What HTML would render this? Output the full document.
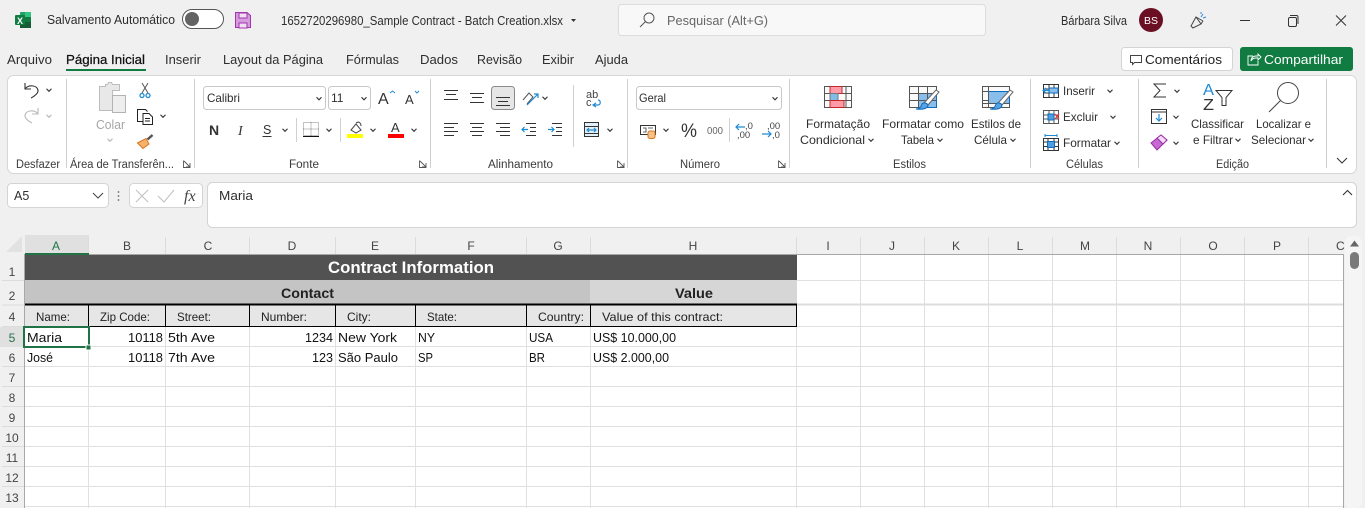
<!DOCTYPE html>
<html lang="pt"><head><meta charset="utf-8"><title>Excel</title>
<style>
html,body{margin:0;padding:0;width:1365px;height:508px;overflow:hidden;background:#f0f0f0}
svg{display:block}
text{font-family:"Liberation Sans",sans-serif;font-size:12px;fill:#333}
.t{font-size:12.5px;fill:#2e2e2e}
.g{font-size:11.5px;fill:#3a3a3a}
.r{font-size:12px;fill:#2e2e2e}
.c{font-size:13px;fill:#111}
.h{font-size:12px;fill:#222}
.ch{font-size:12px;fill:#444;text-anchor:middle}
.rn{font-size:12px;fill:#444;text-anchor:middle}
.chev{fill:none;stroke:#333;stroke-width:1.1}
.chevg{fill:none;stroke:#b5b5b5;stroke-width:1.1}
.l{stroke:#333;stroke-width:1;fill:none}
.b{stroke:#1f8ad2;stroke-width:1.2;fill:none}
.lg{stroke:#d4d4d4;stroke-width:1}
.sep{stroke:#d0d0d0;stroke-width:1}
.gr{stroke:#e0e0e0;stroke-width:1}
</style></head><body>
<svg width="1365" height="508" viewBox="0 0 1365 508" xmlns="http://www.w3.org/2000/svg">
<defs><path id="cv" d="M-2.500-1.300 0 1.300 2.500-1.300"/></defs>
<rect width="1365" height="508" fill="#f0f0f0"/>

<!-- title bar -->
<rect x="20" y="12" width="11" height="16" rx="1" fill="#21a366"/><rect x="25" y="12" width="6" height="5" fill="#33c481"/><rect x="25" y="17" width="6" height="5" fill="#107c41"/><rect x="20" y="22" width="11" height="6" fill="#185c37"/>
<rect x="15" y="15" width="10" height="10" rx="1" fill="#107c41"/><text x="17" y="24" style="font-size:9px;font-weight:bold;fill:#fff">X</text>
<text x="47" y="24" class="t" textLength="128" lengthAdjust="spacingAndGlyphs">Salvamento Automático</text>
<rect x="182.500" y="9.500" width="41" height="19" rx="9.500" fill="#fff" stroke="#555"/><circle cx="192" cy="19" r="7" fill="#636363"/>
<path d="M235.500 12.500H247L250.500 15.500V27.500H235.500Z" fill="#d59bdc" stroke="#a335b0"/><rect x="239" y="13" width="8" height="5" fill="#f0e0f2" stroke="#a335b0"/><rect x="239" y="23" width="8" height="5" fill="#f0e0f2" stroke="#a335b0"/>
<text x="281" y="25" class="t" textLength="282" lengthAdjust="spacingAndGlyphs">1652720296980_Sample Contract - Batch Creation.xlsx</text>
<path d="M571 19h5l-2.500 3z" fill="#333"/>
<rect x="618.500" y="4.500" width="367" height="31" rx="3" fill="#f8f8f8" stroke="#dcdcdc"/>
<circle cx="649" cy="18" r="5" fill="none" stroke="#555"/><path d="M645.500 21.500 640 27" stroke="#555" fill="none"/>
<text x="667" y="25" style="font-size:12.500px;fill:#666" textLength="101" lengthAdjust="spacingAndGlyphs">Pesquisar (Alt+G)</text>
<text x="1061" y="25" class="t" textLength="66" lengthAdjust="spacingAndGlyphs">Bárbara Silva</text>
<circle cx="1151" cy="20" r="12" fill="#6b0f24"/><text x="1151" y="24" style="font-size:10.500px;fill:#fff;text-anchor:middle">BS</text>
<path d="M1196 17 1191 26 1193 28 1201 24ZM1196 17 1203 21M1201 24 1203 21" fill="none" stroke="#444"/><path d="M1203 14 1201 17M1206 17 1203 18M1201 12v2" stroke="#2b88d8" fill="none"/>
<path d="M1240 20.500h10" stroke="#333"/><rect x="1288.500" y="17.500" width="8" height="9" rx="1.500" fill="none" stroke="#333"/><path d="M1290.500 16v-.5h6a1.500 1.500 0 0 1 1.500 1.500v7" fill="none" stroke="#333"/>
<path d="M1336 15.500 1346 25.500M1346 15.500 1336 25.500" stroke="#333" fill="none"/>

<!-- tabs -->
<text x="7" y="64" class="t" textLength="45" lengthAdjust="spacingAndGlyphs">Arquivo</text>
<text x="66" y="64" class="t" textLength="79" lengthAdjust="spacingAndGlyphs" style="fill:#111;stroke:#111;stroke-width:.25">Página Inicial</text>
<rect x="66" y="69" width="80" height="2" fill="#107c41"/>
<text x="165" y="64" class="t" textLength="36" lengthAdjust="spacingAndGlyphs">Inserir</text>
<text x="223" y="64" class="t" textLength="100" lengthAdjust="spacingAndGlyphs">Layout da Página</text>
<text x="346" y="64" class="t" textLength="53" lengthAdjust="spacingAndGlyphs">Fórmulas</text>
<text x="420" y="64" class="t" textLength="38" lengthAdjust="spacingAndGlyphs">Dados</text>
<text x="477" y="64" class="t" textLength="45" lengthAdjust="spacingAndGlyphs">Revisão</text>
<text x="542" y="64" class="t" textLength="32" lengthAdjust="spacingAndGlyphs">Exibir</text>
<text x="595" y="64" class="t" textLength="33" lengthAdjust="spacingAndGlyphs">Ajuda</text>
<rect x="1121.500" y="47.500" width="111" height="23" rx="3" fill="#fff" stroke="#d4d4d4"/>
<path d="M1130.500 55.500h11v7h-7l-2 2v-2h-2z" fill="none" stroke="#444"/>
<text x="1145" y="64" class="t" textLength="77" lengthAdjust="spacingAndGlyphs" style="fill:#222">Comentários</text>
<rect x="1240" y="47" width="113" height="24" rx="3" fill="#107c41"/>
<path d="M1253 56h-5v9h10v-4M1251 61c0-3 2-5 5-5h2v-2l3 3-3 3v-2h-2c-2 0-4 1-5 3z" fill="none" stroke="#fff" stroke-width=".9"/>
<text x="1264" y="64" style="font-size:12.500px;fill:#fff" textLength="79" lengthAdjust="spacingAndGlyphs">Compartilhar</text>

<!-- ribbon -->
<rect x="7.500" y="75.500" width="1349" height="98" rx="6" fill="#fff" stroke="#d6d6d6"/>
<path d="M66.500 79v89M194.500 79v89M430.500 79v89M627.500 79v89M789.500 79v89M1030.500 79v89M1138.500 79v89M1326.500 79v89" class="sep"/>
<text x="16" y="168" class="g" textLength="44" lengthAdjust="spacingAndGlyphs">Desfazer</text>
<text x="70" y="168" class="g" textLength="104" lengthAdjust="spacingAndGlyphs">Área de Transferên...</text>
<text x="289" y="168" class="g" textLength="30" lengthAdjust="spacingAndGlyphs">Fonte</text>
<text x="488" y="168" class="g" textLength="65" lengthAdjust="spacingAndGlyphs">Alinhamento</text>
<text x="680" y="168" class="g" textLength="40" lengthAdjust="spacingAndGlyphs">Número</text>
<text x="893" y="168" class="g" textLength="33" lengthAdjust="spacingAndGlyphs">Estilos</text>
<text x="1066" y="168" class="g" textLength="37" lengthAdjust="spacingAndGlyphs">Células</text>
<text x="1216" y="168" class="g" textLength="33" lengthAdjust="spacingAndGlyphs">Edição</text>
<g fill="none" stroke="#555" stroke-width=".9">
<path d="M183.500 160.500v7h7M184 161l6 6M190 163v4h-4"/>
<path d="M419.500 160.500v7h7M420 161l6 6M426 163v4h-4"/>
<path d="M617.500 160.500v7h7M618 161l6 6M624 163v4h-4"/>
<path d="M778.500 160.500v7h7M779 161l6 6M785 163v4h-4"/>
</g>

<!-- undo / redo -->
<path d="M25 83v6h6M25 89c3-5 13-4 13 2 0 2-3 5-7 7" fill="none" stroke="#333" stroke-width="1.100"/>
<path d="M38 108v6h-6M38 114c-3-5-13-4-13 2 0 2 3 5 7 7" fill="none" stroke="#b8b8b8" stroke-width="1.100"/>
<use href="#cv" x="49" y="90" class="chev"/><use href="#cv" x="49" y="116" class="chevg"/>

<!-- paste -->
<path d="M99.500 86.500h6v-2h2l1-2h3l1 2h2h5v6h-7v20h-13z" fill="#e8e8e8" stroke="#bdbdbd"/>
<rect x="112.500" y="95.500" width="13" height="17" fill="#eee" stroke="#b3b3b3"/>
<text x="96" y="129" style="font-size:12.500px;fill:#a6a6a6" textLength="29" lengthAdjust="spacingAndGlyphs">Colar</text>
<use href="#cv" x="110" y="140" class="chevg"/>
<path d="M142 83 148 93M148 83 142 93" stroke="#555" fill="none"/><circle cx="142" cy="95.500" r="2" fill="none" stroke="#1f8ad2" stroke-width="1.300"/><circle cx="148" cy="95.500" r="2" fill="none" stroke="#1f8ad2" stroke-width="1.300"/>
<path d="M143 121.500h-5.500v-12h8l2 2" fill="none" stroke="#222"/><path d="M143 113.500h6l3.500 3.500v7.500h-9.500zM145 118.500h5M145 121h5" fill="#fff" stroke="#222"/>
<use href="#cv" x="163" y="116" class="chev"/>
<path d="M137.500 143 146 138.500 149 144 143 148.500Z" fill="#f5b26b" stroke="#d8741c"/><path d="M147.500 139.500 152.500 135" stroke="#555" stroke-width="2.500"/>

<!-- font -->
<rect x="203.500" y="86.500" width="122" height="23" rx="3" fill="#fff" stroke="#c8c8c8"/>
<text x="207" y="102" class="r" textLength="33" lengthAdjust="spacingAndGlyphs">Calibri</text><use href="#cv" x="319" y="98.500" class="chev"/>
<rect x="328.500" y="86.500" width="42" height="23" rx="3" fill="#fff" stroke="#c8c8c8"/>
<text x="331" y="102" class="r">11</text><use href="#cv" x="364" y="98.500" class="chev"/>
<text x="378" y="104" style="font-size:16px;fill:#333">A</text><path d="M390 93l2.500-2 2.500 2" fill="none" stroke="#1f8ad2"/>
<text x="405" y="104" style="font-size:13px;fill:#333">A</text><path d="M415 91l2 2 2-2" fill="none" stroke="#1f8ad2"/>
<text x="209" y="135" style="font-size:14px;font-weight:bold;fill:#333">N</text>
<text x="238" y="135" style="font-size:14px;font-style:italic;font-family:'Liberation Serif',serif;fill:#333">I</text>
<text x="263" y="134" style="font-size:12.500px;fill:#333">S</text><path d="M262.500 136.500h9" stroke="#333"/>
<use href="#cv" x="285" y="130" class="chev"/><path d="M296.500 118v24M340.500 118v24" class="sep"/>
<path d="M303.500 122.500h15v13h-15zM311 122.500v13M303.500 129h15" fill="none" stroke="#888" stroke-dasharray="1 1"/><path d="M303 136.500h16" stroke="#111"/>
<use href="#cv" x="329" y="130" class="chev"/>
<path d="M351 130 356 124 361 130 356 133ZM356 123l2-1c2 0 3 2 3 4" fill="none" stroke="#444"/><rect x="347" y="134" width="16" height="4" fill="#ff0"/>
<use href="#cv" x="373" y="130" class="chev"/>
<text x="391" y="132" style="font-size:13px;fill:#333">A</text><rect x="388" y="134" width="16" height="4" fill="#f00"/>
<use href="#cv" x="414" y="130" class="chev"/>

<!-- alignment -->
<path d="M444 90.500h14M446 94.500h10M444 99.500h14" class="l"/>
<path d="M470 93.500h14M472 97.500h10M470 102.500h14" class="l"/>
<rect x="491.500" y="86.500" width="23" height="23" rx="3" fill="#e6e6e6" stroke="#8a8a8a"/>
<path d="M496 97.500h14M498 101.500h10M496 105.500h14" class="l"/>
<path d="M523 100 529 93 533 97 527 104" fill="none" stroke="#555"/><path d="M527 105 538 94M534 94h4v4" class="b"/>
<use href="#cv" x="545" y="98" class="chev"/>
<path d="M444 123.500h14M444 127.500h10M444 131.500h14M444 135.500h10" class="l"/>
<path d="M470 123.500h14M472 127.500h10M470 131.500h14M472 135.500h10" class="l"/>
<path d="M496 123.500h14M500 127.500h10M496 131.500h14M500 135.500h10" class="l"/>
<path d="M526 123.500h10M530 127.500h6M530 131.500h6M526 135.500h10" class="l"/><path d="M522 129.500h6M524.500 127 522 129.500 524.500 132" class="b"/>
<path d="M552 123.500h10M556 127.500h6M556 131.500h6M552 135.500h10" class="l"/><path d="M548 129.500h6M551.500 127 554 129.500 551.500 132" class="b"/>
<path d="M573.500 85v62" class="sep"/>
<text x="586" y="98" style="font-size:11px;fill:#444">ab</text><text x="586" y="106" style="font-size:11px;fill:#444">c</text>
<path d="M594 105h4c3 0 3-5 0-5M596 103l-3 2 3 2" class="b"/>
<rect x="584.500" y="122.500" width="14" height="14" fill="#e2f0fa" stroke="#333"/><path d="M584 126.500h15M584 133.500h15" stroke="#333"/><path d="M587 130h9M589 128l-2 2 2 2M594 128l2 2-2 2" class="b" stroke-width="1"/>
<use href="#cv" x="610" y="130" class="chev"/>

<!-- number -->
<rect x="636.500" y="86.500" width="145" height="23" rx="3" fill="#fff" stroke="#c8c8c8"/>
<text x="639" y="102" class="r" textLength="27" lengthAdjust="spacingAndGlyphs">Geral</text><use href="#cv" x="775" y="98.500" class="chev"/>
<rect x="640.500" y="125.500" width="15" height="9" fill="#fff" stroke="#333"/><path d="M643 128h3v4h-3M648 128h5M648 132h5" fill="none" stroke="#333" stroke-width=".8"/><rect x="648" y="131" width="7" height="7.500" rx="2" fill="#f6c28a" stroke="#d8741c"/>
<use href="#cv" x="666" y="130" class="chev"/>
<text x="681" y="137" style="font-size:19px;fill:#333" textLength="16" lengthAdjust="spacingAndGlyphs">%</text>
<text x="707" y="134" style="font-size:10px;fill:#666" textLength="16" lengthAdjust="spacingAndGlyphs">000</text>
<path d="M729.500 118v24" class="sep"/>
<text x="745" y="129" style="font-size:9.500px;fill:#444">,0</text><text x="737" y="138" style="font-size:9.500px;fill:#444">,00</text><path d="M736 127h9M739 124l-3 3 3 3" class="b"/>
<text x="767" y="129" style="font-size:9.500px;fill:#444">,00</text><text x="772" y="138" style="font-size:9.500px;fill:#444">,0</text><path d="M762 134h9M768 131l3 3-3 3" class="b"/>

<!-- styles icons -->
<g fill="#fff" stroke="#555">
<rect x="824.500" y="86.500" width="27" height="21" fill="#fafafa"/>
<path d="M824.500 93.500h27M824.500 100.500h27M830 86.500v21M846 86.500v21" fill="none"/>
<rect x="830" y="86.500" width="12" height="7" fill="#ff9ba6" stroke="#c62828"/>
<rect x="830" y="93.500" width="8" height="7" fill="#7fbcea" stroke="#777"/>
<rect x="830" y="100.500" width="14" height="7" fill="#ff9ba6" stroke="#c62828"/>
</g>
<g stroke="#555" fill="none">
<rect x="909.500" y="86.500" width="27" height="21" fill="#fafafa"/>
<rect x="918.500" y="93.500" width="18" height="14" fill="#88bdec" stroke="#0f6cbd"/>
<path d="M909.500 93.500h27M909.500 100.500h27M918.500 86.500v21M927.500 86.500v21"/>
<path d="M924 103 936 90 939 92 928 105" fill="#fff" stroke="#666"/>
<path d="M916 109c4 0 5-2 6-5 2-2 5-1 6 1 0 3-4 5-12 4z" fill="#5ba2e0" stroke="#0f6cbd"/>
<rect x="982.500" y="86.500" width="27" height="21" fill="#fafafa"/>
<rect x="988.500" y="91.500" width="21" height="12" fill="#88bdec" stroke="#0f6cbd"/>
<path d="M982.500 91.500h6M982.500 100.500h6M982.500 103.500h27M988.500 86.500v21M1000 103.500v4"/>
<path d="M998 103 1010 90 1013 92 1002 105" fill="#fff" stroke="#666"/>
<path d="M990 109c4 0 5-2 6-5 2-2 5-1 6 1 0 3-4 5-12 4z" fill="#5ba2e0" stroke="#0f6cbd"/>
</g>
<text x="806" y="128" class="r" textLength="64" lengthAdjust="spacingAndGlyphs">Formatação</text>
<text x="800" y="144" class="r" textLength="65" lengthAdjust="spacingAndGlyphs">Condicional</text><use href="#cv" x="871" y="140" class="chev"/>
<text x="882" y="128" class="r" textLength="82" lengthAdjust="spacingAndGlyphs">Formatar como</text>
<text x="901" y="144" class="r" textLength="33" lengthAdjust="spacingAndGlyphs">Tabela</text><use href="#cv" x="940" y="140" class="chev"/>
<text x="971" y="128" class="r" textLength="50" lengthAdjust="spacingAndGlyphs">Estilos de</text>
<text x="974" y="144" class="r" textLength="33" lengthAdjust="spacingAndGlyphs">Célula</text><use href="#cv" x="1013" y="140" class="chev"/>

<!-- cells -->
<g fill="none" stroke="#333">
<rect x="1043.500" y="84.500" width="15" height="13" fill="#fff"/><path d="M1043.500 89h15M1043.500 93h15M1049 84.500v13M1054 84.500v13"/>
<rect x="1049" y="88" width="9" height="5" fill="#88bdec" stroke="#0f6cbd"/><path d="M1043 90.500h7M1046 88l-3 2.500 3 2.500" stroke="#1f8ad2" stroke-width="1.200"/>
<rect x="1043.500" y="110.500" width="15" height="13" fill="#fff" stroke="#555"/><path d="M1043.500 115h15M1043.500 119h15M1049 110.500v13M1054 110.500v13" stroke="#555"/>
<rect x="1048" y="114" width="6" height="6" fill="#4f9ee0" stroke="#0f6cbd"/><path d="M1055 114l4 5M1059 114l-4 5" stroke="#e53935" stroke-width="1.200"/>
<rect x="1043.500" y="138.500" width="15" height="12" fill="#fff"/><path d="M1043.500 142h15M1043.500 146.500h15M1048 138.500v12M1054 138.500v12"/>
<rect x="1047.500" y="141.500" width="7" height="6" fill="#4f9ee0" stroke="#0f6cbd"/><path d="M1045 135.500h12M1045 134v3M1057 134v3" stroke="#1f8ad2"/>
</g>
<text x="1063" y="95" class="r" textLength="32" lengthAdjust="spacingAndGlyphs">Inserir</text><use href="#cv" x="1110" y="91" class="chev"/>
<text x="1063" y="121" class="r" textLength="35" lengthAdjust="spacingAndGlyphs">Excluir</text><use href="#cv" x="1113" y="117" class="chev"/>
<text x="1063" y="147" class="r" textLength="48" lengthAdjust="spacingAndGlyphs">Formatar</text><use href="#cv" x="1117" y="143" class="chev"/>

<!-- editing -->
<path d="M1166 84h-12l6 6.500-6 6.500h12" fill="none" stroke="#333"/><use href="#cv" x="1177" y="91" class="chev"/>
<rect x="1151.500" y="109.500" width="15" height="14" fill="#fff" stroke="#333"/><path d="M1151.500 112h15" stroke="#333"/><path d="M1159 114v7M1156 118l3 3 3-3" class="b"/><use href="#cv" x="1176" y="117" class="chev"/>
<path d="M1151 143 1161 135 1167 140 1157 150Z" fill="#c66ad2" stroke="#9b2aa8"/><path d="M1157 138 1163 144 1167 140 1161 135Z" fill="#f2dcf5" stroke="#9b2aa8"/><use href="#cv" x="1176" y="143" class="chev"/>
<text x="1203" y="95" style="font-size:16px;fill:#1f8ad2" textLength="11" lengthAdjust="spacingAndGlyphs">A</text><text x="1203" y="110" style="font-size:16px;fill:#333" textLength="11" lengthAdjust="spacingAndGlyphs">Z</text>
<path d="M1216 90.500h16l-6 7v8h-4v-8z" fill="none" stroke="#333"/>
<circle cx="1288" cy="93" r="10.500" fill="none" stroke="#444"/><path d="M1280.500 100.500 1269 112" stroke="#444" fill="none"/>
<text x="1191" y="128" class="r" textLength="53" lengthAdjust="spacingAndGlyphs">Classificar</text>
<text x="1193" y="144" class="r" textLength="40" lengthAdjust="spacingAndGlyphs">e Filtrar</text><use href="#cv" x="1238" y="140" class="chev"/>
<text x="1256" y="128" class="r" textLength="55" lengthAdjust="spacingAndGlyphs">Localizar e</text>
<text x="1251" y="144" class="r" textLength="55" lengthAdjust="spacingAndGlyphs">Selecionar</text><use href="#cv" x="1311" y="140" class="chev"/>
<path d="M1337 158 1342 163 1347 158" fill="none" stroke="#333"/>

<!-- formula bar -->
<rect x="7.500" y="183.500" width="101" height="24" rx="4" fill="#fff" stroke="#d4d4d4"/>
<text x="14" y="200" class="r" style="font-size:12.500px">A5</text>
<path d="M93 193 98 198 103 193" fill="none" stroke="#444"/>
<path d="M118.500 191v2M118.500 195v2M118.500 199v2" stroke="#888" stroke-width="1.500"/>
<rect x="129.500" y="183.500" width="73" height="24" rx="4" fill="#fff" stroke="#d4d4d4"/>
<path d="M136 190 148 202M148 190 136 202" stroke="#c0c0c0" fill="none"/><path d="M158 196 164 202 174 190" stroke="#c0c0c0" fill="none"/>
<text x="184" y="201" style="font-family:'Liberation Serif',serif;font-style:italic;font-size:16px;fill:#444">fx</text>
<rect x="207.500" y="182.500" width="1149" height="45" rx="5" fill="#fff" stroke="#d4d4d4"/>
<text x="219" y="200" class="r" style="font-size:12.500px" textLength="34" lengthAdjust="spacingAndGlyphs">Maria</text>
<path d="M1343 195 1347.500 190.500 1352 195" fill="none" stroke="#333" stroke-width="1.100"/>

<!-- sheet -->
<rect x="25" y="255" width="1318" height="253" fill="#fff"/>
<rect x="25" y="235" width="64" height="19" fill="#e0e0e0"/>
<path d="M22 236v16h-16z" fill="#e2e2e2"/>
<g class="gr">
<path d="M860.500 255v253M924.500 255v253M988.500 255v253M1052.500 255v253M1116.500 255v253M1180.500 255v253M1244.500 255v253M1308.500 255v253"/>
<path d="M88.500 327v181M165.500 327v181M249.500 327v181M335.500 327v181M415.500 327v181M526.500 327v181M590.500 327v181M796.500 327v181"/>
<path d="M797 280.500h546"/>
<path d="M25 346.500h1318M25 366.500h1318M25 386.500h1318M25 406.500h1318M25 426.500h1318M25 446.500h1318M25 466.500h1318M25 486.500h1318M25 506.500h1318M797 326.500h546"/>
</g>
<path d="M797 304.500h546" stroke="#dcdcdc" stroke-width="2"/>
<g stroke="#dcdcdc"><path d="M88.500 237v17M165.500 237v17M249.500 237v17M335.500 237v17M415.500 237v17M526.500 237v17M590.500 237v17M796.500 237v17M860.500 237v17M924.500 237v17M988.500 237v17M1052.500 237v17M1116.500 237v17M1180.500 237v17M1244.500 237v17M1308.500 237v17"/>
<path d="M2 280.500h22M2 305h22M2 326.500h22M2 346.500h22M2 366.500h22M2 386.500h22M2 406.500h22M2 426.500h22M2 446.500h22M2 466.500h22M2 486.500h22"/></g>
<rect x="0" y="327" width="24" height="20" fill="#e0e0e0"/>
<path d="M24.500 254v254M25 254.500h1319M1343.500 254v254" stroke="#a8a8a8" fill="none"/>
<rect x="25" y="253" width="64" height="2" fill="#217346"/>

<text x="56" y="250" class="ch" style="fill:#217346">A</text>
<text x="127" y="250" class="ch">B</text><text x="208" y="250" class="ch">C</text><text x="292" y="250" class="ch">D</text><text x="375" y="250" class="ch">E</text><text x="471" y="250" class="ch">F</text><text x="558" y="250" class="ch">G</text><text x="693" y="250" class="ch">H</text><text x="828" y="250" class="ch">I</text><text x="892" y="250" class="ch">J</text><text x="956" y="250" class="ch">K</text><text x="1020" y="250" class="ch">L</text><text x="1085" y="250" class="ch">M</text><text x="1148" y="250" class="ch">N</text><text x="1213" y="250" class="ch">O</text><text x="1277" y="250" class="ch">P</text>
<text x="1336" y="250" style="font-size:12px;fill:#444">C</text>

<text x="12" y="276" class="rn">1</text><text x="12" y="300" class="rn">2</text><text x="12" y="321" class="rn">4</text><text x="12" y="342" class="rn" style="fill:#217346">5</text><text x="12" y="362" class="rn">6</text><text x="12" y="382" class="rn">7</text><text x="12" y="402" class="rn">8</text><text x="12" y="422" class="rn">9</text><text x="12" y="442" class="rn">10</text><text x="12" y="462" class="rn">11</text><text x="12" y="482" class="rn">12</text><text x="12" y="502" class="rn">13</text>

<rect x="25" y="255" width="772" height="25" fill="#525252"/>
<rect x="25" y="280" width="565" height="24" fill="#c4c4c4"/>
<rect x="590" y="280" width="207" height="24" fill="#d6d6d6"/>
<rect x="25" y="305" width="772" height="21" fill="#e6e6e6"/>
<path d="M25 304.500h772" stroke="#000" stroke-width="2"/>
<path d="M25 326.500h772M88.500 305v21M165.500 305v21M249.500 305v21M335.500 305v21M415.500 305v21M526.500 305v21M590.500 305v21M796.500 304v23" stroke="#000" fill="none"/>

<text x="328" y="273" style="font-size:16.500px;font-weight:bold;fill:#fff" textLength="166" lengthAdjust="spacingAndGlyphs">Contract Information</text>
<text x="281" y="298" style="font-size:13.500px;font-weight:bold;fill:#222" textLength="53" lengthAdjust="spacingAndGlyphs">Contact</text>
<text x="675" y="298" style="font-size:13.500px;font-weight:bold;fill:#222" textLength="38" lengthAdjust="spacingAndGlyphs">Value</text>

<text x="36" y="321" class="h" textLength="34" lengthAdjust="spacingAndGlyphs">Name:</text>
<text x="100" y="321" class="h" textLength="50" lengthAdjust="spacingAndGlyphs">Zip Code:</text>
<text x="177" y="321" class="h" textLength="34" lengthAdjust="spacingAndGlyphs">Street:</text>
<text x="261" y="321" class="h" textLength="46" lengthAdjust="spacingAndGlyphs">Number:</text>
<text x="347" y="321" class="h" textLength="24" lengthAdjust="spacingAndGlyphs">City:</text>
<text x="427" y="321" class="h" textLength="30" lengthAdjust="spacingAndGlyphs">State:</text>
<text x="538" y="321" class="h" textLength="46" lengthAdjust="spacingAndGlyphs">Country:</text>
<text x="602" y="321" class="h" textLength="121" lengthAdjust="spacingAndGlyphs">Value of this contract:</text>

<text x="27" y="342" class="c" textLength="35" lengthAdjust="spacingAndGlyphs">Maria</text>
<text x="128" y="342" class="c" textLength="35" lengthAdjust="spacingAndGlyphs">10118</text>
<text x="168" y="342" class="c" textLength="47" lengthAdjust="spacingAndGlyphs">5th Ave</text>
<text x="305" y="342" class="c" textLength="28" lengthAdjust="spacingAndGlyphs">1234</text>
<text x="338" y="342" class="c" textLength="59" lengthAdjust="spacingAndGlyphs">New York</text>
<text x="418" y="342" class="c" textLength="17" lengthAdjust="spacingAndGlyphs">NY</text>
<text x="529" y="342" class="c" textLength="24" lengthAdjust="spacingAndGlyphs">USA</text>
<text x="593" y="342" class="c" textLength="83" lengthAdjust="spacingAndGlyphs">US$ 10.000,00</text>
<text x="27" y="362" class="c" textLength="26" lengthAdjust="spacingAndGlyphs">José</text>
<text x="128" y="362" class="c" textLength="35" lengthAdjust="spacingAndGlyphs">10118</text>
<text x="168" y="362" class="c" textLength="47" lengthAdjust="spacingAndGlyphs">7th Ave</text>
<text x="312" y="362" class="c" textLength="21" lengthAdjust="spacingAndGlyphs">123</text>
<text x="338" y="362" class="c" textLength="60" lengthAdjust="spacingAndGlyphs">São Paulo</text>
<text x="418" y="362" class="c" textLength="15" lengthAdjust="spacingAndGlyphs">SP</text>
<text x="529" y="362" class="c" textLength="16" lengthAdjust="spacingAndGlyphs">BR</text>
<text x="593" y="362" class="c" textLength="76" lengthAdjust="spacingAndGlyphs">US$ 2.000,00</text>

<rect x="24" y="327" width="65" height="20" fill="none" stroke="#217346" stroke-width="2"/>
<rect x="86" y="345" width="5" height="5" fill="#217346" stroke="#fff"/>

<!-- scrollbar -->
<rect x="1345" y="236" width="17" height="272" rx="6" fill="#f5f5f5"/>
<path d="M1350 246.500 1354.500 240.500 1359 246.500Z" fill="#666"/>
<rect x="1350" y="252" width="9" height="17" rx="4.500" fill="#7a7a7a"/>
</svg>
</body></html>
